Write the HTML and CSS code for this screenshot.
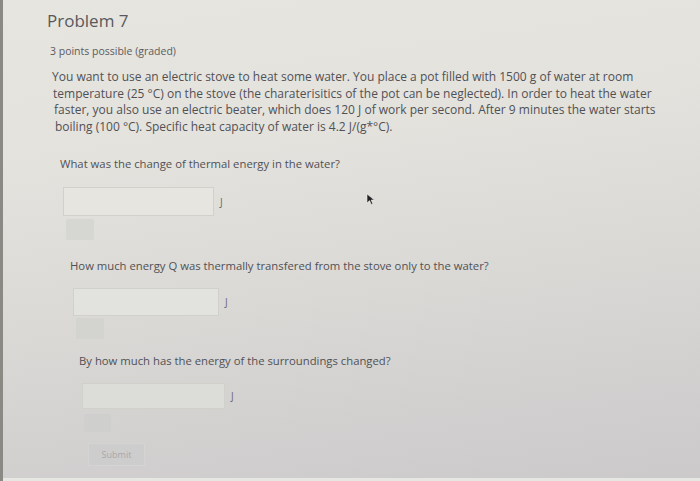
FILE: index.html
```html
<!DOCTYPE html>
<html>
<head>
<meta charset="utf-8">
<link rel="stylesheet" href="styles.css">
</head>
<body>
<div class="screen">
  <div class="content">
    <h1 class="title">Problem 7</h1>
    <div class="meta">3 points possible (graded)</div>
    <div class="para">
      <div class="line l1">You want to use an electric stove to heat some water. You place a pot filled with 1500 g of water at room</div>
      <div class="line l2">temperature (25 °C) on the stove (the charaterisitics of the pot can be neglected). In order to heat the water</div>
      <div class="line l3">faster, you also use an electric beater, which does 120 J of work per second. After 9 minutes the water starts</div>
      <div class="line l4">boiling (100 °C). Specific heat capacity of water is 4.2 J/(g*°C).</div>
    </div>

    <div class="q q1">
      <div class="qtext">What was the change of thermal energy in the water?</div>
      <div class="answer">
        <div class="box b1"></div><span class="unit">J</span>
        <span class="cursor"><svg width="9" height="12" viewBox="0 0 9 12"><path d="M1 1 L1 10 L3.5 7.6 L5.3 11.4 L6.8 10.7 L5.1 7 L8.4 7 Z" fill="#222" stroke="#eee" stroke-width="0.6"/></svg></span>
      </div>
      <div class="mini"></div>
    </div>

    <div class="q q2">
      <div class="qtext">How much energy Q was thermally transfered from the stove only to the water?</div>
      <div class="answer">
        <div class="box b2"></div><span class="unit">J</span>
      </div>
      <div class="mini"></div>
    </div>

    <div class="q q3">
      <div class="qtext">By how much has the energy of the surroundings changed?</div>
      <div class="answer">
        <div class="box b3"></div><span class="unit">J</span>
      </div>
      <div class="mini m3"></div>
      <div class="submit">Submit</div>
    </div>
  </div>
  <div class="bottom-strip"></div>
</div>
</body>
</html>
```

FILE: styles.css
```css
html, body {
  margin: 0;
  padding: 0;
}
body {
  width: 700px;
  height: 481px;
  overflow: hidden;
  font-family: "Open Sans", "Liberation Sans", sans-serif;
  color: #55565a;
}
.screen {
  position: relative;
  width: 697px;
  height: 481px;
  border-left: 3px solid #8a8984;
  background: linear-gradient(172deg, #e7e5e0 0%, #e4e2dd 30%, #d9d8d5 60%, #cbc9ca 100%);
  display: flex;
  flex-direction: column;
}
.content {
  flex: 1;
  padding: 9px 0 0 44px;
}
.title {
  margin: 0;
  font-weight: 400;
  font-size: 17px;
  line-height: 24px;
  color: #58595c;
}
.meta {
  margin: 11px 0 0 3px;
  font-size: 10.5px;
  line-height: 14px;
  color: #5a5b5e;
}
.para {
  margin: 11px 0 0 5px;
  font-size: 12px;
  line-height: 16.6px;
  color: #505155;
}
.line { white-space: nowrap; }
.l2 { margin-left: 1px; }
.l3 { margin-left: 2px; }
.l4 { margin-left: 3px; }

.q { font-size: 11.3px; }
.qtext { line-height: 15px; color: #505155; white-space: nowrap; }
.q1 { margin: 21px 0 0 13px; }
.q2 { margin: 18px 0 0 23px; }
.q3 { margin: 14px 0 0 32px; }

.answer {
  display: flex;
  align-items: center;
  gap: 6px;
  margin: 16px 0 0 3px;
}
.q2 .answer { margin-top: 15px; }
.q3 .answer { margin-top: 15px; }
.box {
  height: 27px;
  border: 1px solid #d0d1cb;
  background: #e6e5e0;
  box-sizing: border-box;
}
.b1 { width: 151px; height: 29px; }
.b2 { width: 146px; height: 28px; background: #e2e2de; }
.b3 { width: 143px; height: 26px; background: #dcdcd9; }
.unit { font-size: 10px; color: #6a6b6e; }
.cursor { margin-left: 137px; margin-top: -6px; display: flex; }
.mini {
  width: 28px;
  height: 21px;
  margin: 3px 0 0 6px;
  background: #d6d6d2;
  border-radius: 2px;
}
.q2 .mini { margin-top: 2px; background: #d3d3d0; }
.m3 { width: 27px; height: 18px; margin: 5px 0 0 5px; background: #cfcfcd; }
.submit {
  width: 57px;
  height: 23px;
  margin: 11px 0 0 9px;
  border: 1px solid #d4d4d2;
  background: #cecdcd;
  box-sizing: border-box;
  font-size: 9px;
  color: #a8a8a8;
  display: flex;
  align-items: center;
  justify-content: center;
}
.bottom-strip {
  height: 3px;
  background: #e6e6e2;
}
```
